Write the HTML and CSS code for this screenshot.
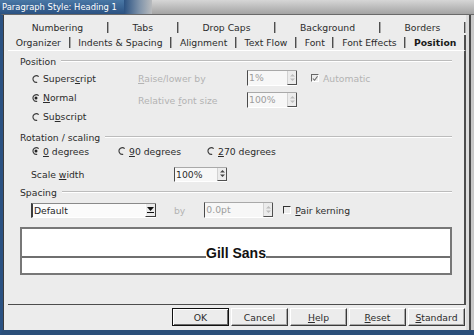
FILE: index.html
```html
<!DOCTYPE html>
<html>
<head>
<meta charset="utf-8">
<link rel="stylesheet" href="styles.css">
</head>
<body>
<div class="win">
  <div class="titlebar">
    <div class="tb-blue"><span class="title">Paragraph Style: Heading 1</span></div>
    <div class="tb-fade"></div>
    <div class="tb-grey"></div>
  </div>
  <div class="frame">
    <div class="dialog">
      <div class="tabs">
        <div class="tabrow">
          <div class="tab"><span>Numbering</span></div>
          <div class="tab"><span>Tabs</span></div>
          <div class="tab"><span>Drop Caps</span></div>
          <div class="tab"><span>Background</span></div>
          <div class="tab"><span>Borders</span></div>
        </div>
        <div class="tabrow">
          <div class="tab"><span>Organizer</span></div>
          <div class="tab"><span>Indents &amp; Spacing</span></div>
          <div class="tab"><span>Alignment</span></div>
          <div class="tab"><span>Text Flow</span></div>
          <div class="tab"><span>Font</span></div>
          <div class="tab"><span>Font Effects</span></div>
          <div class="tab sel"><span>Position</span></div>
        </div>
      </div>

      <div class="panel">
        <div class="gtitle gt-pos"><span>Position</span><i class="gline"></i></div>
        <div class="pos">
          <div class="radios">
            <div class="radio"><svg class="rb" width="8" height="8" viewBox="0 0 8 8"><path d="M6.7 1.7A3.3 3.3 0 1 0 5.2 7.2" fill="none" stroke="#3a3a3a" stroke-width="1.1"/></svg><span>Supers<u>c</u>ript</span></div>
            <div class="radio"><svg class="rb" width="8" height="8" viewBox="0 0 8 8"><path d="M6.7 1.7A3.3 3.3 0 1 0 5.2 7.2" fill="none" stroke="#3a3a3a" stroke-width="1.1"/><circle cx="4" cy="4" r="1.5" fill="#222"/></svg><span><u>N</u>ormal</span></div>
            <div class="radio"><svg class="rb" width="8" height="8" viewBox="0 0 8 8"><path d="M6.7 1.7A3.3 3.3 0 1 0 5.2 7.2" fill="none" stroke="#3a3a3a" stroke-width="1.1"/></svg><span>Su<u>b</u>script</span></div>
          </div>
          <div class="posgrid">
            <span class="dis"><u>R</u>aise/lower by</span>
            <div class="spin dis"><span class="val">1%</span><span class="arrows"><svg width="5" height="9" viewBox="0 0 5 9"><path d="M2.5 1L5 3.5H0Z M0 5.5H5L2.5 8Z" fill="#bdbdbd"/></svg></span></div>
            <div class="check dis"><span class="cb cb-on"><svg width="7" height="7" viewBox="0 0 7 7"><path d="M1 3.5L3 5.6L6.5 0.8" fill="none" stroke="#6a6a6a" stroke-width="1.2"/></svg></span><span>Automatic</span></div>
            <span class="dis">Relative <u>f</u>ont size</span>
            <div class="spin dis"><span class="val">100%</span><span class="arrows"><svg width="5" height="9" viewBox="0 0 5 9"><path d="M2.5 1L5 3.5H0Z M0 5.5H5L2.5 8Z" fill="#bdbdbd"/></svg></span></div>
          </div>
        </div>

        <div class="gtitle gt-rot"><span>Rotation / scaling</span><i class="gline"></i></div>
        <div class="rot">
          <div class="radio"><svg class="rb" width="8" height="8" viewBox="0 0 8 8"><path d="M6.7 1.7A3.3 3.3 0 1 0 5.2 7.2" fill="none" stroke="#3a3a3a" stroke-width="1.1"/><circle cx="4" cy="4" r="1.5" fill="#222"/></svg><span><u>0</u> degrees</span></div>
          <div class="radio"><svg class="rb" width="8" height="8" viewBox="0 0 8 8"><path d="M6.7 1.7A3.3 3.3 0 1 0 5.2 7.2" fill="none" stroke="#3a3a3a" stroke-width="1.1"/></svg><span><u>9</u>0 degrees</span></div>
          <div class="radio"><svg class="rb" width="8" height="8" viewBox="0 0 8 8"><path d="M6.7 1.7A3.3 3.3 0 1 0 5.2 7.2" fill="none" stroke="#3a3a3a" stroke-width="1.1"/></svg><span><u>2</u>70 degrees</span></div>
        </div>
        <div class="scale">
          <span class="scale-label">Scale <u>w</u>idth</span>
          <div class="spin spin-scale"><span class="val">100%</span><span class="arrows"><svg width="5" height="9" viewBox="0 0 5 9"><path d="M2.5 1L5 3.5H0Z M0 5.5H5L2.5 8Z" fill="#444"/></svg></span></div>
        </div>

        <div class="gtitle gt-sp"><span>Spacing</span><i class="gline"></i></div>
        <div class="sprow">
          <div class="combo"><span class="val">Default</span><span class="cbtn"><svg width="7" height="6" viewBox="0 0 7 6"><path d="M0 0H7L3.5 4Z" fill="#111"/><rect x="0" y="5" width="7" height="1" fill="#111"/></svg></span></div>
          <span class="dis by">by</span>
          <div class="spin dis spin-pt"><span class="val">0.0pt</span><span class="arrows"><svg width="5" height="9" viewBox="0 0 5 9"><path d="M2.5 1L5 3.5H0Z M0 5.5H5L2.5 8Z" fill="#bdbdbd"/></svg></span></div>
          <div class="check kern"><span class="cb"></span><span><u>P</u>air kerning</span></div>
        </div>

        <div class="preview">
          <div class="pv-top">
            <div class="pv-line"><i class="seg"></i><span class="pv-text">Gill Sans</span><i class="seg"></i></div>
          </div>
        </div>
      </div>

      <div class="buttons">
        <div class="btn def">OK</div>
        <div class="btn">Cancel</div>
        <div class="btn"><span><u>H</u>elp</span></div>
        <div class="btn"><span><u>R</u>eset</span></div>
        <div class="btn"><span><u>S</u>tandard</span></div>
      </div>
    </div>
    <div class="redge"></div>
  </div>
</div>
</body>
</html>
```

FILE: styles.css
```css
* { box-sizing: border-box; }
html, body { margin: 0; padding: 0; }
body {
  width: 474px;
  height: 335px;
  overflow: hidden;
  background: #2b4f7a;
  font-family: "DejaVu Sans", sans-serif;
  font-size: 9.25px;
  color: #2b2b2b;
}
u { text-decoration: underline; text-underline-offset: 1px; text-decoration-thickness: 1px; }

.win { width: 474px; height: 335px; display: flex; flex-direction: column; }

.titlebar { display: flex; height: 14px; }
.tb-blue {
  width: 124px;
  background: linear-gradient(#4a78a6, #2b5282);
  color: #fff;
  font-family: "DejaVu Sans", sans-serif;
  font-size: 8.4px;
  line-height: 14px;
  padding-left: 2px;
  white-space: nowrap;
}
.tb-fade { width: 28px; background: linear-gradient(to right, #2b5282, #7f93aa 55%, #b9bbbd); }
.tb-grey { flex: 1; background: linear-gradient(#d6d6d6, #a4a4a4); }

.frame {
  flex: 1;
  display: flex;
  background: #ececec;
  border-left: 3px solid #2b5282;
  border-bottom: 5px solid #2b4f7a;
  border-top: 1px solid #6a6a6a;
}
.dialog {
  width: 463px;
  border-left: 1px solid #3c3c3c;
  padding-left: 4px;
  display: flex;
  flex-direction: column;
}
.redge {
  flex: 1;
  background: linear-gradient(to right, #dcdcdc 0 3px, #4a4a4a 3px 5px, #c9c9c9 5px);
}

.tabs { padding-top: 5px; }
.tabrow { display: flex; height: 15px; }
.tab { flex: 1 1 auto; display: flex; align-items: center; white-space: nowrap; }
.tab span { flex: 1 1 auto; text-align: center; }
.tab::after {
  content: "";
  width: 2px;
  height: 11px;
  background: linear-gradient(to right, #4e4e4e 50%, #a9a9a9 50%);
}
.tab.sel span { font-weight: bold; color: #1a1a1a; }
.tab.sel::after { background: #4d4d4d; height: 15px; }

.panel {
  height: 255px;
  border-top: 1px solid #fff;
  border-right: 2px solid #4d4d4d;
  border-bottom: 1px solid #4d4d4d;
  padding: 0 12px;
}

.gtitle { display: flex; align-items: center; height: 12px; white-space: nowrap; }
.gline { flex: 1; height: 2px; border-top: 1px solid #bcbcbc; border-bottom: 1px solid #fff; margin-left: 5px; }
.gt-pos { margin-top: 4px; }
.gt-rot { margin-top: 5px; }
.gt-sp { margin-top: 4px; }

.dis { color: #b3b3b3; }

.pos { display: flex; height: 59px; padding-left: 12px; }
.radios { width: 106px; padding-top: 2px; display: flex; flex-direction: column; }
.radio { display: flex; align-items: center; height: 19px; gap: 3px; white-space: nowrap; }
.rb { flex: none; }
.posgrid {
  display: grid;
  grid-template-columns: 109px 50px auto;
  grid-auto-rows: 16px;
  row-gap: 6px;
  margin-top: 3px;
  align-items: center;
  white-space: nowrap;
}

.spin {
  display: flex;
  height: 16px;
  background: #f7f7f7;
  border-left: 1px solid #4a4a4a;
  border-top: 1px solid #a9a9a9;
  border-bottom: 1px solid #fff;
}
.spin .val { flex: 1; padding-left: 1px; line-height: 14px; color: #2b2b2b; }
.spin.dis .val { color: #9c9c9c; }
.arrows {
  width: 10px;
  display: flex;
  align-items: center;
  justify-content: center;
  border-left: 1px solid #d2d2d2;
  border-right: 1px solid #505050;
  border-bottom: 1px solid #505050;
  background: #ececec;
}

.check { display: flex; align-items: center; gap: 4px; margin-left: 14px; white-space: nowrap; }
.cb {
  width: 8px;
  height: 8px;
  border-top: 1px solid #333;
  border-left: 1px solid #333;
  border-right: 1px solid #fff;
  border-bottom: 1px solid #fff;
  display: flex;
  align-items: center;
  justify-content: center;
}
.cb-on { border-top-color: #666; border-left-color: #666; }

.rot {
  display: grid;
  grid-template-columns: 86px 89px auto;
  height: 14px;
  margin-top: 1px;
  padding-left: 12px;
}
.rot .radio { height: 14px; }

.scale { display: flex; align-items: center; height: 16px; margin-top: 8px; padding-left: 11px; }
.scale-label { width: 143px; }
.spin-scale { width: 53px; height: 15px; }

.sprow { display: flex; align-items: center; height: 16px; margin-top: 4px; padding-left: 11px; }
.combo {
  width: 125px;
  height: 15px;
  display: flex;
  background: #fbfbfb;
  border-left: 2px solid #3c3c3c;
  border-top: 1px solid #8a8a8a;
  border-bottom: 1px solid #fff;
}
.combo .val { flex: 1; padding-left: 1px; line-height: 13px; color: #1f1f1f; }
.cbtn {
  width: 11px;
  display: flex;
  align-items: center;
  justify-content: center;
  background: #ececec;
  border-left: 1px solid #fff;
  border-right: 1px solid #3c3c3c;
  border-bottom: 1px solid #3c3c3c;
}
.by { margin-left: 18px; }
.spin-pt { width: 69px; margin-left: 19px; }
.kern { margin-left: 10px; }

.preview {
  height: 48px;
  margin-top: 9px;
  background: #fff;
  border: 2px solid #777;
}
.pv-top { height: 32px; display: flex; align-items: flex-end; }
.pv-line { display: flex; align-items: baseline; width: 100%; }
.seg { flex: 1; height: 2px; background: #6f6f6f; }
.pv-text {
  font-family: "Liberation Sans", Arial, sans-serif;
  font-weight: bold;
  font-size: 14px;
  line-height: 16px;
  color: #111;
}

.buttons { display: flex; justify-content: flex-end; gap: 2px; margin-top: 3px; padding-right: 1px; height: 18px; }
.btn {
  width: 57px;
  height: 18px;
  display: flex;
  align-items: center;
  justify-content: center;
  background: #ececec;
  border-top: 1px solid #fff;
  border-left: 1px solid #fff;
  border-right: 1px solid #3a3a3a;
  border-bottom: 1px solid #3a3a3a;
  box-shadow: inset -1px -1px 0 #a6a6a6;
  color: #2b2b2b;
}
.btn.def {
  border: 1px solid #111;
  box-shadow: inset 1px 1px 0 #fff, inset -1px -1px 0 #6a6a6a;
}
```
